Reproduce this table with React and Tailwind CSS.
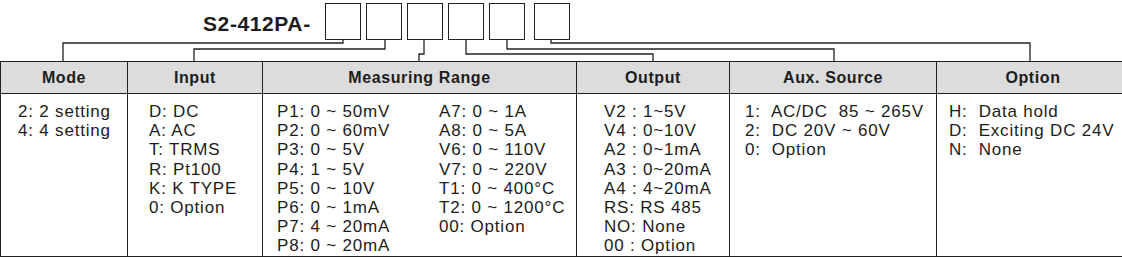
import React from 'react'

// part-number code boxes and the table they point to
const headers = ['Mode', 'Input', 'Measuring Range', 'Output', 'Aux. Source', 'Option']

const mode = ['2: 2 setting', '4: 4 setting']
const input = ['D: DC', 'A: AC', 'T: TRMS', 'R: Pt100', 'K: K TYPE', '0: Option']
const rangeA = ['P1: 0 ~ 50mV', 'P2: 0 ~ 60mV', 'P3: 0 ~ 5V', 'P4: 1 ~ 5V', 'P5: 0 ~ 10V', 'P6: 0 ~ 1mA', 'P7: 4 ~ 20mA', 'P8: 0 ~ 20mA']
const rangeB = ['A7: 0 ~ 1A', 'A8: 0 ~ 5A', 'V6: 0 ~ 110V', 'V7: 0 ~ 220V', 'T1: 0 ~ 400°C', 'T2: 0 ~ 1200°C', '00: Option']
const output = ['V2 : 1~5V', 'V4 : 0~10V', 'A2 : 0~1mA', 'A3 : 0~20mA', 'A4 : 4~20mA', 'RS: RS 485', 'NO: None', '00 : Option']
const aux = ['1:  AC/DC  85 ~ 265V', '2:  DC 20V ~ 60V', '0:  Option']
const option = ['H:  Data hold', 'D:  Exciting DC 24V', 'N:  None']

function Lines({ items }) {
  return (
    <div className="flex flex-col">
      {items.map((t) => (
        <span key={t} className="whitespace-pre leading-[19.2px]">{t}</span>
      ))}
    </div>
  )
}

export default function App() {
  return (
    <div className="w-[1122px] h-[257px] overflow-hidden bg-white text-[#1c1c1c]" style={{ fontFamily: '"Liberation Sans", Arial, sans-serif' }}>
      {/* code line */}
      <div className="flex items-start pt-[3px] pl-[203px] h-[40px]">
        <div className="text-[21px] font-bold tracking-[0.6px] leading-none mt-[10px] w-[122px]">S2-412PA-</div>
        <div className="flex gap-[5px]">
          <div className="w-[36px] h-[37px] border-[1.5px] border-[#222]" />
          <div className="w-[36px] h-[37px] border-[1.5px] border-[#222]" />
          <div className="w-[36px] h-[37px] border-[1.5px] border-[#222]" />
          <div className="w-[36px] h-[37px] border-[1.5px] border-[#222]" />
          <div className="w-[36px] h-[37px] border-[1.5px] border-[#222]" />
          <div className="w-[36px] h-[37px] border-[1.5px] border-[#222] ml-[4px]" />
        </div>
      </div>

      {/* connector lines */}
      <svg width="1122" height="21" className="block" fill="none" stroke="#222" strokeWidth="1.3">
        <path d="M343 0 V3 H63 V21" />
        <path d="M385 0 V9 H194 V21" />
        <path d="M424 0 V14 H419 V21" />
        <path d="M466 0 V14 H653 V21" />
        <path d="M507 0 V9 H834 V21" />
        <path d="M551 0 V3 H1030 V21" />
      </svg>

      {/* table */}
      <div className="w-[1130px] border-l border-t border-b border-[#222] grid grid-cols-[127px_135px_314px_153px_207px_1fr] text-[17px] tracking-[0.8px]">
        {headers.map((h) => (
          <div key={h} className="h-[32px] bg-[#dcdcdc] border-r border-b border-[#222] flex items-center justify-center font-bold text-[16px] tracking-[0.6px]">
            {h}
          </div>
        ))}
        <div className="h-[162px] border-r border-[#222] pl-[17px] pt-[8px]"><Lines items={mode} /></div>
        <div className="border-r border-[#222] pl-[21px] pt-[8px]"><Lines items={input} /></div>
        <div className="border-r border-[#222] pl-[14px] pt-[8px] grid grid-cols-[162px_1fr]">
          <Lines items={rangeA} />
          <Lines items={rangeB} />
        </div>
        <div className="border-r border-[#222] pl-[27px] pt-[8px]"><Lines items={output} /></div>
        <div className="border-r border-[#222] pl-[15px] pt-[8px]"><Lines items={aux} /></div>
        <div className="pl-[12px] pt-[8px]"><Lines items={option} /></div>
      </div>
    </div>
  )
}
